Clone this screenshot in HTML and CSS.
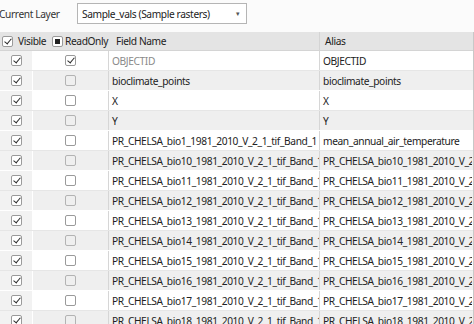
FILE: index.html
```html
<!DOCTYPE html>
<html lang="en">
<head>
  <meta charset="UTF-8">
  <title>Fields</title>
  <link rel="stylesheet" href="styles.css">
</head>
<body>

  <!-- Layer selection -->
  <div class="toolbar">
    <span class="toolbar-label">Current Layer</span>
    <div class="dropdown">
      <span>Sample_vals (Sample rasters)</span>
      <span class="dropdown-arrow">&#9662;</span>
    </div>
  </div>

  <!-- Fields table -->
  <div class="grid">
    <div class="row head">
      <div class="cell c-vis"><span class="box checked"></span>Visible</div>
      <div class="cell c-ro"><span class="box filled"></span>ReadOnly</div>
      <div class="cell c-name">Field Name</div>
      <div class="cell c-alias">Alias</div>
    </div>

    <div class="row">
      <div class="cell c-vis"><span class="box checked"></span></div>
      <div class="cell c-ro"><span class="box checked"></span></div>
      <div class="cell c-name dim">OBJECTID</div>
      <div class="cell c-alias">OBJECTID</div>
    </div>
    <div class="row alt">
      <div class="cell c-vis"><span class="box checked"></span></div>
      <div class="cell c-ro"><span class="box"></span></div>
      <div class="cell c-name">bioclimate_points</div>
      <div class="cell c-alias">bioclimate_points</div>
    </div>
    <div class="row">
      <div class="cell c-vis"><span class="box checked"></span></div>
      <div class="cell c-ro"><span class="box"></span></div>
      <div class="cell c-name">X</div>
      <div class="cell c-alias">X</div>
    </div>
    <div class="row alt">
      <div class="cell c-vis"><span class="box checked"></span></div>
      <div class="cell c-ro"><span class="box"></span></div>
      <div class="cell c-name">Y</div>
      <div class="cell c-alias">Y</div>
    </div>
    <div class="row">
      <div class="cell c-vis"><span class="box checked"></span></div>
      <div class="cell c-ro"><span class="box"></span></div>
      <div class="cell c-name">PR_CHELSA_bio1_1981_2010_V_2_1_tif_Band_1</div>
      <div class="cell c-alias">mean_annual_air_temperature</div>
    </div>
    <div class="row alt">
      <div class="cell c-vis"><span class="box checked"></span></div>
      <div class="cell c-ro"><span class="box"></span></div>
      <div class="cell c-name">PR_CHELSA_bio10_1981_2010_V_2_1_tif_Band_1</div>
      <div class="cell c-alias">PR_CHELSA_bio10_1981_2010_V_2_1_tif_Band_1</div>
    </div>
    <div class="row">
      <div class="cell c-vis"><span class="box checked"></span></div>
      <div class="cell c-ro"><span class="box"></span></div>
      <div class="cell c-name">PR_CHELSA_bio11_1981_2010_V_2_1_tif_Band_1</div>
      <div class="cell c-alias">PR_CHELSA_bio11_1981_2010_V_2_1_tif_Band_1</div>
    </div>
    <div class="row alt">
      <div class="cell c-vis"><span class="box checked"></span></div>
      <div class="cell c-ro"><span class="box"></span></div>
      <div class="cell c-name">PR_CHELSA_bio12_1981_2010_V_2_1_tif_Band_1</div>
      <div class="cell c-alias">PR_CHELSA_bio12_1981_2010_V_2_1_tif_Band_1</div>
    </div>
    <div class="row">
      <div class="cell c-vis"><span class="box checked"></span></div>
      <div class="cell c-ro"><span class="box"></span></div>
      <div class="cell c-name">PR_CHELSA_bio13_1981_2010_V_2_1_tif_Band_1</div>
      <div class="cell c-alias">PR_CHELSA_bio13_1981_2010_V_2_1_tif_Band_1</div>
    </div>
    <div class="row alt">
      <div class="cell c-vis"><span class="box checked"></span></div>
      <div class="cell c-ro"><span class="box"></span></div>
      <div class="cell c-name">PR_CHELSA_bio14_1981_2010_V_2_1_tif_Band_1</div>
      <div class="cell c-alias">PR_CHELSA_bio14_1981_2010_V_2_1_tif_Band_1</div>
    </div>
    <div class="row">
      <div class="cell c-vis"><span class="box checked"></span></div>
      <div class="cell c-ro"><span class="box"></span></div>
      <div class="cell c-name">PR_CHELSA_bio15_1981_2010_V_2_1_tif_Band_1</div>
      <div class="cell c-alias">PR_CHELSA_bio15_1981_2010_V_2_1_tif_Band_1</div>
    </div>
    <div class="row alt">
      <div class="cell c-vis"><span class="box checked"></span></div>
      <div class="cell c-ro"><span class="box"></span></div>
      <div class="cell c-name">PR_CHELSA_bio16_1981_2010_V_2_1_tif_Band_1</div>
      <div class="cell c-alias">PR_CHELSA_bio16_1981_2010_V_2_1_tif_Band_1</div>
    </div>
    <div class="row">
      <div class="cell c-vis"><span class="box checked"></span></div>
      <div class="cell c-ro"><span class="box"></span></div>
      <div class="cell c-name">PR_CHELSA_bio17_1981_2010_V_2_1_tif_Band_1</div>
      <div class="cell c-alias">PR_CHELSA_bio17_1981_2010_V_2_1_tif_Band_1</div>
    </div>
    <div class="row alt">
      <div class="cell c-vis"><span class="box checked"></span></div>
      <div class="cell c-ro"><span class="box"></span></div>
      <div class="cell c-name">PR_CHELSA_bio18_1981_2010_V_2_1_tif_Band_1</div>
      <div class="cell c-alias">PR_CHELSA_bio18_1981_2010_V_2_1_tif_Band_1</div>
    </div>
  </div>

</body>
</html>
```

FILE: styles.css
```css
body {
  margin: 0;
  background-color: #fbfbfb;
  font-family: "Noto Sans", "Open Sans", sans-serif;
  font-size: 10.2px;
  letter-spacing: -0.38px;
  color: #222;
  overflow: hidden;
}

.toolbar {
  display: flex;
  align-items: center;
  height: 32px;
  padding-bottom: 5px;
  box-sizing: border-box;
}

.toolbar-label {
  width: 78px;
  margin-left: -1px;
  color: #333;
}

.dropdown {
  display: flex;
  justify-content: space-between;
  align-items: center;
  width: 170px;
  height: 21px;
  box-sizing: border-box;
  padding: 0 6px 0 4px;
  border: 1px solid #b5b5b5;
  background: #fff;
  white-space: nowrap;
}

.dropdown-arrow {
  font-size: 7px;
  color: #555;
}

.grid {
  width: 473px;
  border-right: 1px solid #c8c8c8;
}

.row {
  display: grid;
  grid-template-columns: 33px 76px 211px 152px;
  height: 20px;
  box-sizing: border-box;
  background: #fff;
  border-bottom: 1px solid #e6e6e6;
}

.row.alt {
  background: #efefef;
  border-bottom-color: #fff;
}

.row.head {
  grid-template-columns: 50px 59px 211px 152px;
  height: 19px;
  background: #e4e4e4;
  border-bottom: 1px solid #d4d4d4;
}

.cell {
  display: flex;
  align-items: center;
  overflow: hidden;
  white-space: nowrap;
}

.c-vis {
  justify-content: center;
  background: #f2f2f2;
  border-right: 1px solid #fff;
}

.c-ro {
  justify-content: center;
  border-right: 1px solid #d6d6d6;
}

.c-name {
  padding-left: 3px;
  border-right: 1px solid #d6d6d6;
}

.c-alias {
  padding-left: 3px;
}

.dim {
  color: #8a8a8a;
}

.head .cell {
  background: transparent;
  border-right: 1px solid #d4d4d4;
  color: #222;
}

.head .c-vis,
.head .c-ro {
  justify-content: flex-start;
  border-right: none;
}

.head .c-vis {
  padding-left: 2px;
}

.head .c-vis .box {
  margin-right: 5px;
}

.head .c-ro {
  padding-left: 2px;
}

.head .c-ro .box {
  margin-right: 2px;
}

.head .c-name {
  padding-left: 7px;
}

.head .c-alias {
  padding-left: 5px;
  border-right: none;
}

/* checkbox */
.box {
  position: relative;
  width: 11px;
  height: 11px;
  box-sizing: border-box;
  border: 1px solid #9a9a9a;
  border-radius: 2px;
  background: #fff;
  flex-shrink: 0;
}

.box.checked::after {
  content: "";
  position: absolute;
  left: 3px;
  top: 0px;
  width: 3px;
  height: 6px;
  border: solid #2a2a2a;
  border-width: 0 1.6px 1.6px 0;
  transform: rotate(40deg);
}

.box.filled::after {
  content: "";
  position: absolute;
  left: 2px;
  top: 2px;
  width: 5px;
  height: 5px;
  background: #222;
}

.alt .c-ro .box {
  background: #efefef;
  border-color: #b3b3b3;
}
```
